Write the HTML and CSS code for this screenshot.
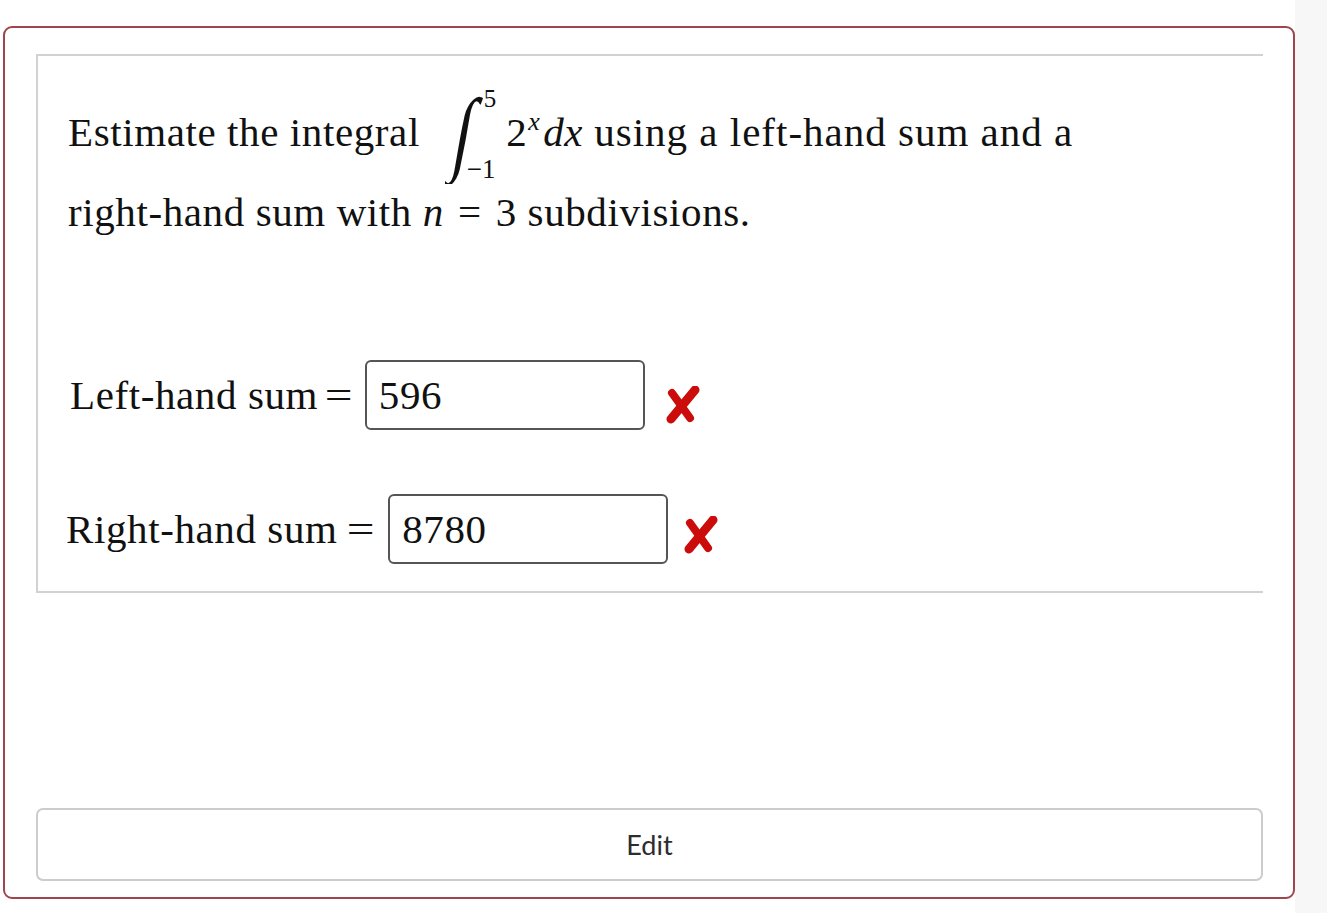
FILE: index.html
```html
<!DOCTYPE html>
<html>
<head>
<meta charset="utf-8">
<link rel="stylesheet" href="styles.css">
</head>
<body>
<div class="page">
  <main class="main">
    <section class="card">
      <div class="question">
        <div class="line1">Estimate the integral <span class="integral"><span class="int-grid"><span class="int-sign">∫</span><span class="int-sup">5</span><span class="int-sub">−1</span></span></span><span class="expr">2<sup class="it">x</sup><span class="it">dx</span></span><span class="tail"> using a left-hand sum and a</span></div>
        <div class="line2">right-hand sum with <span class="it">n</span><span class="eq">=</span>3 subdivisions.</div>
        <div class="row row-left">
          <span class="label">Left-hand sum</span><span class="eq-row">=</span>
          <div class="answer">596</div>
          <svg class="xmark" viewBox="0 0 36 38" width="36" height="38"><path d="M31 4 L7 33" /><path d="M8 7 L26 32" class="thin"/></svg>
        </div>
        <div class="row row-right">
          <span class="label">Right-hand sum</span><span class="eq-row eq-r">=</span>
          <div class="answer">8780</div>
          <svg class="xmark x2" viewBox="0 0 36 38" width="36" height="38"><path d="M31 4 L7 33" /><path d="M8 7 L26 32" class="thin"/></svg>
        </div>
      </div>
      <div class="actions">
        <button class="edit">Edit</button>
      </div>
    </section>
  </main>
  <aside class="side"></aside>
</div>
</body>
</html>
```
FILE: styles.css
```css
html, body {
  margin: 0;
  padding: 0;
  background: #ffffff;
}
.page {
  display: flex;
  width: 1327px;
  height: 913px;
}
.main {
  width: 1295px;
  background: #ffffff;
  padding-top: 26px;
  box-sizing: border-box;
}
.side {
  flex: 1;
  background: #f7f7f7;
}
.card {
  margin-left: 3px;
  width: 1292px;
  box-sizing: border-box;
  height: 873px;
  border: 2px solid #9e464b;
  border-radius: 9px;
  padding: 26px 30px 0 31px;
  display: flex;
  flex-direction: column;
}
.question {
  border-top: 2px solid #d2d2d2;
  border-left: 2px solid #d2d2d2;
  border-bottom: 2px solid #d2d2d2;
  padding: 28px 0 27px 30px;
  font-family: "Liberation Serif", "Times New Roman", serif;
  font-size: 41px;
  letter-spacing: 0.6px;
  color: #111;
  line-height: 49px;
}
.line1 {
  white-space: nowrap;
}
.tail {
  letter-spacing: 1px;
}
.integral {
  display: inline-block;
  height: 100px;
  overflow: hidden;
  vertical-align: -38px;
  margin: 0 10px 0 14px;
  line-height: 1;
  letter-spacing: 0;
}
.int-grid {
  display: grid;
  grid-template-columns: 38px auto;
  grid-template-rows: 1fr 1fr;
  height: 100px;
}
.int-sign {
  grid-row: 1 / 3;
  grid-column: 1;
  font-family: "Liberation Serif", serif;
  font-size: 64px;
  line-height: 100px;
  text-align: center;
  transform: scale(1.05, 1.45) skewX(-14deg) translateY(-1px);
}
.int-sup {
  grid-row: 1;
  grid-column: 2;
  font-size: 25px;
  align-self: start;
  margin-top: 2px;
  margin-left: 1px;
}
.int-sub {
  grid-row: 2;
  grid-column: 2;
  font-size: 27px;
  align-self: end;
  margin-bottom: 1px;
  margin-left: -16px;
}
.expr {
  letter-spacing: 0.5px;
}
.expr sup {
  font-size: 26px;
  vertical-align: 16px;
  line-height: 0;
  margin-left: 1px;
  margin-right: 3px;
}
.it {
  font-style: italic;
}
.eq {
  margin: 0 14px;
}
.line2 {
  margin-top: 4px;
  white-space: nowrap;
}
.row {
  display: flex;
  align-items: baseline;
  white-space: nowrap;
}
.row-left {
  margin-top: 123px;
  margin-left: 2px;
}
.row-right {
  margin-top: 64px;
  margin-left: -2px;
}
.eq-row {
  margin-left: 9px;
  margin-right: 14px;
  display: inline-block;
  transform: scaleX(1.2);
}
.eq-r {
  margin-left: 12px;
  margin-right: 15px;
}
.answer {
  width: 280px;
  height: 70px;
  box-sizing: border-box;
  border: 2px solid #555;
  border-radius: 6px;
  line-height: 66px;
  padding-left: 12px;
}
.xmark {
  align-self: center;
  margin-left: 19px;
  margin-top: 20px;
}
.x2 {
  margin-left: 14px;
  margin-top: 12px;
}
.xmark path {
  stroke: #cc0b0b;
  stroke-width: 9;
  stroke-linecap: round;
  fill: none;
}
.xmark path.thin {
  stroke-width: 8;
}
.actions {
  margin-top: auto;
  padding-bottom: 16px;
}
.edit {
  display: block;
  width: 100%;
  height: 73px;
  background: #fff;
  border: 2px solid #cccccc;
  border-radius: 7px;
  font-family: Lato, "Open Sans", sans-serif;
  font-size: 27px;
  color: #2d2d2d;
  cursor: pointer;
}
```
